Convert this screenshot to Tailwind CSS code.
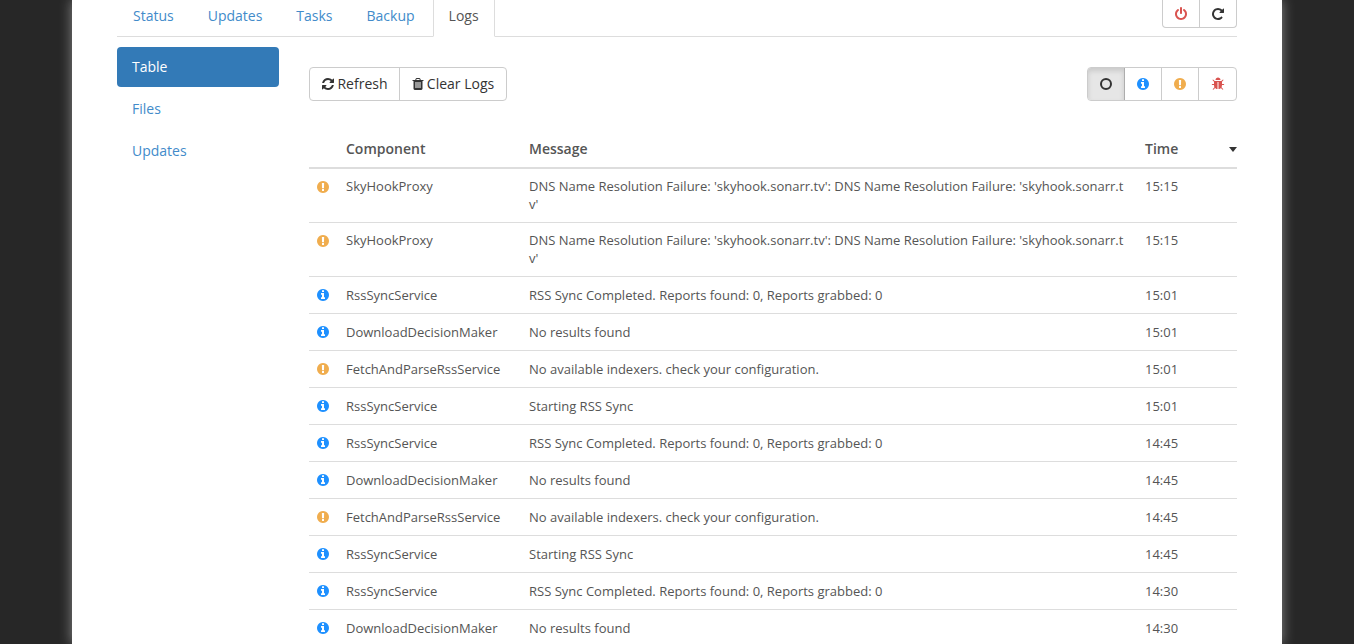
<!DOCTYPE html>
<html lang="en">
<head>
<meta charset="utf-8">
<title>Logs</title>
<script src="https://cdn.jsdelivr.net/npm/@tailwindcss/browser@4"></script>
</head>
<body class="h-screen overflow-hidden bg-[#272727] font-['Open_Sans',sans-serif] text-[14px] text-[#555]">
<main class="mx-[72px] h-full w-[1210px] overflow-hidden bg-white px-[45px] shadow-[0_0_12px_rgba(255,255,255,0.45)]">
  <div class="flex h-[37px] justify-between border-b border-[#ddd]">
    <nav class="flex gap-[2px] text-[#428bca]">
      <a class="mb-[-1px] border border-transparent px-[15px] pt-[5px] leading-[20px]">Status</a>
      <a class="mb-[-1px] border border-transparent px-[15px] pt-[5px] leading-[20px]">Updates</a>
      <a class="mb-[-1px] border border-transparent px-[15px] pt-[5px] leading-[20px]">Tasks</a>
      <a class="mb-[-1px] border border-transparent px-[15px] pt-[5px] leading-[20px]">Backup</a>
      <a class="mb-[-1px] border border-[#ddd] border-t-0 border-b-white bg-white px-[15px] pt-[6px] leading-[20px] text-[#555]">Logs</a>
    </nav>
    <div class="flex h-[28px] rounded-b-[4px] border border-t-0 border-[#ccc]">
      <button class="flex w-[37px] items-center justify-center border-r border-[#ccc]"><svg class="h-[14px] w-[14px] fill-[#d9534f]" viewBox="0 0 1792 1792"><path d="M1664 896q0 156-61 298t-164 245-245 164-298 61-298-61-245-164-164-245-61-298q0-182 80.5-343t226.5-270q43-32 95.5-25t83.5 50q32 42 24.5 94.5t-49.5 84.5q-98 74-151.5 181t-53.5 228q0 104 40.5 198.5t109.5 163.5 163.5 109.5 198.5 40.5 198.5-40.5 163.5-109.5 109.5-163.5 40.5-198.5q0-121-53.5-228t-151.5-181q-42-32-49.5-84.5t24.5-94.5q31-43 84-50t95 25q146 109 226.5 270t80.5 343zm-640-768v640q0 52-38 90t-90 38-90-38-38-90v-640q0-52 38-90t90-38 90 38 38 90z"/></svg></button>
      <button class="flex w-[36px] items-center justify-center"><svg class="h-[14px] w-[14px] fill-[#333]" viewBox="0 0 1792 1792"><path d="M1664 256v448q0 26-19 45t-45 19h-448q-42 0-59-40-17-39 14-69l138-138q-148-137-349-137-104 0-198.5 40.5t-163.5 109.5-109.5 163.5-40.5 198.5 40.5 198.5 109.5 163.5 163.5 109.5 198.5 40.5q119 0 225-52t179-147q7-10 23-12 15 0 25 9l137 138q9 8 9.5 20.5t-7.5 22.5q-109 132-264 204.5t-327 72.5q-156 0-298-61t-245-164-164-245-61-298 61-298 164-245 245-164 298-61q147 0 284.5 55.5t244.5 156.5l130-129q29-31 70-14 39 17 39 59z"/></svg></button>
    </div>
  </div>
  <div class="flex">
    <aside class="w-[162px] shrink-0 pt-[10px]">
      <a class="flex h-[40px] items-center rounded-[4px] bg-[#337ab7] px-[15px] pb-[2px] text-white">Table</a>
      <a class="mt-[2px] flex h-[40px] items-center px-[15px] pb-[2px] text-[#428bca]">Files</a>
      <a class="mt-[2px] flex h-[40px] items-center px-[15px] pb-[2px] text-[#428bca]">Updates</a>
    </aside>
    <section class="ml-[30px] w-[928px] pt-[30px]">
      <div class="flex h-[34px] justify-between">
        <div class="flex rounded-[4px] border border-[#ccc] text-[#333]">
          <button class="flex w-[90px] items-center justify-center gap-[2px] border-r border-[#ccc] pb-[1px]"><svg class="h-[14px] w-[14px] fill-[#333]" viewBox="0 0 1792 1792"><path d="M1639 1056q0 5-1 7-64 268-268 434.5t-478 166.5q-146 0-282.5-55t-243.5-157l-129 129q-19 19-45 19t-45-19-19-45v-448q0-26 19-45t45-19h448q26 0 45 19t19 45-19 45l-137 137q71 66 161 102t187 36q134 0 250-65t186-179q11-17 53-117 8-23 30-23h192q13 0 22.5 9.5t9.5 22.5zm25-800v448q0 26-19 45t-45 19h-448q-26 0-45-19t-19-45 19-45l138-138q-148-137-349-137-134 0-250 65t-186 179q-11 17-53 117-8 23-30 23h-199q-13 0-22.5-9.5t-9.5-22.5v-7q65-268 270-434.5t480-166.5q146 0 284 55.5t245 156.5l130-129q19-19 45-19t45 19 19 45z"/></svg>Refresh</button>
          <button class="flex w-[106px] items-center justify-center gap-[3px] pb-[1px]"><svg class="h-[14px] w-[12px] fill-[#333]" viewBox="128 0 1536 1792"><path d="M704 1376v-704q0-14-9-23t-23-9h-64q-14 0-23 9t-9 23v704q0 14 9 23t23 9h64q14 0 23-9t9-23zm256 0v-704q0-14-9-23t-23-9h-64q-14 0-23 9t-9 23v704q0 14 9 23t23 9h64q14 0 23-9t9-23zm256 0v-704q0-14-9-23t-23-9h-64q-14 0-23 9t-9 23v704q0 14 9 23t23 9h64q14 0 23-9t9-23zm-544-992h448l-48-117q-7-9-17-11h-317q-10 2-17 11zm928 32v64q0 14-9 23t-23 9h-96v948q0 83-47 143.5t-113 60.5h-832q-66 0-113-58.5t-47-141.5v-952h-96q-14 0-23-9t-9-23v-64q0-14 9-23t23-9h309l70-167q15-37 54-63t79-26h320q40 0 79 26t54 63l70 167h309q14 0 23 9t9 23z"/></svg>Clear Logs</button>
        </div>
        <div class="flex rounded-[4px] border border-[#ccc]">
          <button class="flex w-[37px] items-center justify-center rounded-l-[3px] border-r border-[#adadad] bg-[#e6e6e6] shadow-[inset_0_3px_5px_rgba(0,0,0,0.125)]"><span class="h-[12px] w-[12px] rounded-full border-2 border-[#333]"></span></button>
          <button class="flex w-[37px] items-center justify-center border-r border-[#ccc]"><svg class="h-[14px] w-[14px] fill-[#1e90ff]" viewBox="0 0 1792 1792"><path d="M1152 1376v-160q0-14-9-23t-23-9h-96v-512q0-14-9-23t-23-9h-320q-14 0-23 9t-9 23v160q0 14 9 23t23 9h96v320h-96q-14 0-23 9t-9 23v160q0 14 9 23t23 9h448q14 0 23-9t9-23zm-128-896v-160q0-14-9-23t-23-9h-192q-14 0-23 9t-9 23v160q0 14 9 23t23 9h192q14 0 23-9t9-23zm640 416q0 209-103 385.5t-279.5 279.5-385.5 103-385.5-103-279.5-279.5-103-385.5 103-385.5 279.5-279.5 385.5-103 385.5 103 279.5 279.5 103 385.5z"/></svg></button>
          <button class="flex w-[37px] items-center justify-center border-r border-[#ccc]"><svg class="h-[14px] w-[14px] fill-[#f0ad4e]" viewBox="0 0 1792 1792"><path d="M896 128q209 0 385.5 103t279.5 279.5 103 385.5-103 385.5-279.5 279.5-385.5 103-385.5-103-279.5-279.5-103-385.5 103-385.5 279.5-279.5 385.5-103zm128 1247v-190q0-14-9-23.5t-22-9.5h-192q-13 0-23 10t-10 23v190q0 13 10 23t23 10h192q13 0 22-9.5t9-23.5zm-2-344l18-621q0-12-10-18-10-8-24-8h-220q-14 0-24 8-10 6-10 18l17 621q0 10 10 17.5t24 7.5h185q14 0 23.5-7.5t10.5-17.5z"/></svg></button>
          <button class="flex w-[37px] items-center justify-center"><svg class="h-[14px] w-[14px] fill-[#d9534f]" viewBox="0 0 1792 1792"><path d="M1696 960q0 26-19 45t-45 19h-224q0 171-67 290l208 209q19 19 19 45t-19 45q-18 19-45 19t-45-19l-198-197q-5 5-15 13t-42 28.5-65 36.5-82 29-97 13v-896h-128v896q-51 0-101.5-13.5t-87-33-66-39-43.5-32.5l-15-14-183 207q-20 21-48 21-24 0-43-16-19-18-20.5-44.5t15.5-46.5l202-227q-58-114-58-274h-224q-26 0-45-19t-19-45 19-45 45-19h224v-294l-173-173q-19-19-19-45t19-45 45-19 45 19l173 173h844l173-173q19-19 45-19t45 19 19 45-19 45l-173 173v294h224q26 0 45 19t19 45zm-480-576h-640q0-133 93.5-226.5t226.5-93.5 226.5 93.5 93.5 226.5z"/></svg></button>
        </div>
      </div>
      <div class="mt-[29px] text-[13px]">
        <div class="grid h-[39px] grid-cols-[37px_183px_616px_92px] items-center border-b-2 border-[#ddd] text-[14px] font-semibold">
          <span></span><span>Component</span><span>Message</span>
          <span class="flex items-center justify-between"><span>Time</span><i class="mt-[1px] h-0 w-0 border-x-[4px] border-t-[5px] border-x-transparent border-t-[#333]"></i></span>
        </div>
        <div class="grid h-[54px] grid-cols-[37px_183px_616px_92px] border-b border-[#ddd] pt-[8px] leading-[18.2px]">
          <span class="pl-[7px] pt-[3px]"><svg class="h-[14px] w-[14px] fill-[#f0ad4e]" viewBox="0 0 1792 1792"><path d="M896 128q209 0 385.5 103t279.5 279.5 103 385.5-103 385.5-279.5 279.5-385.5 103-385.5-103-279.5-279.5-103-385.5 103-385.5 279.5-279.5 385.5-103zm128 1247v-190q0-14-9-23.5t-22-9.5h-192q-13 0-23 10t-10 23v190q0 13 10 23t23 10h192q13 0 22-9.5t9-23.5zm-2-344l18-621q0-12-10-18-10-8-24-8h-220q-14 0-24 8-10 6-10 18l17 621q0 10 10 17.5t24 7.5h185q14 0 23.5-7.5t10.5-17.5z"/></svg></span>
          <span>SkyHookProxy</span><span class="break-all pr-[16px]">DNS Name Resolution Failure: 'skyhook.sonarr.tv': DNS Name Resolution Failure: 'skyhook.sonarr.tv'</span><span>15:15</span>
        </div>
        <div class="grid h-[54px] grid-cols-[37px_183px_616px_92px] border-b border-[#ddd] pt-[8px] leading-[18.2px]">
          <span class="pl-[7px] pt-[3px]"><svg class="h-[14px] w-[14px] fill-[#f0ad4e]" viewBox="0 0 1792 1792"><path d="M896 128q209 0 385.5 103t279.5 279.5 103 385.5-103 385.5-279.5 279.5-385.5 103-385.5-103-279.5-279.5-103-385.5 103-385.5 279.5-279.5 385.5-103zm128 1247v-190q0-14-9-23.5t-22-9.5h-192q-13 0-23 10t-10 23v190q0 13 10 23t23 10h192q13 0 22-9.5t9-23.5zm-2-344l18-621q0-12-10-18-10-8-24-8h-220q-14 0-24 8-10 6-10 18l17 621q0 10 10 17.5t24 7.5h185q14 0 23.5-7.5t10.5-17.5z"/></svg></span>
          <span>SkyHookProxy</span><span class="break-all pr-[16px]">DNS Name Resolution Failure: 'skyhook.sonarr.tv': DNS Name Resolution Failure: 'skyhook.sonarr.tv'</span><span>15:15</span>
        </div>
        <div class="grid h-[37px] grid-cols-[37px_183px_616px_92px] items-center border-b border-[#ddd] [&>span]:pt-[2px]">
          <svg class="ml-[7px] h-[14px] w-[14px] fill-[#1e90ff]" viewBox="0 0 1792 1792"><path d="M1152 1376v-160q0-14-9-23t-23-9h-96v-512q0-14-9-23t-23-9h-320q-14 0-23 9t-9 23v160q0 14 9 23t23 9h96v320h-96q-14 0-23 9t-9 23v160q0 14 9 23t23 9h448q14 0 23-9t9-23zm-128-896v-160q0-14-9-23t-23-9h-192q-14 0-23 9t-9 23v160q0 14 9 23t23 9h192q14 0 23-9t9-23zm640 416q0 209-103 385.5t-279.5 279.5-385.5 103-385.5-103-279.5-279.5-103-385.5 103-385.5 279.5-279.5 385.5-103 385.5 103 279.5 279.5 103 385.5z"/></svg>
          <span>RssSyncService</span><span>RSS Sync Completed. Reports found: 0, Reports grabbed: 0</span><span>15:01</span>
        </div>
        <div class="grid h-[37px] grid-cols-[37px_183px_616px_92px] items-center border-b border-[#ddd] [&>span]:pt-[2px]">
          <svg class="ml-[7px] h-[14px] w-[14px] fill-[#1e90ff]" viewBox="0 0 1792 1792"><path d="M1152 1376v-160q0-14-9-23t-23-9h-96v-512q0-14-9-23t-23-9h-320q-14 0-23 9t-9 23v160q0 14 9 23t23 9h96v320h-96q-14 0-23 9t-9 23v160q0 14 9 23t23 9h448q14 0 23-9t9-23zm-128-896v-160q0-14-9-23t-23-9h-192q-14 0-23 9t-9 23v160q0 14 9 23t23 9h192q14 0 23-9t9-23zm640 416q0 209-103 385.5t-279.5 279.5-385.5 103-385.5-103-279.5-279.5-103-385.5 103-385.5 279.5-279.5 385.5-103 385.5 103 279.5 279.5 103 385.5z"/></svg>
          <span>DownloadDecisionMaker</span><span>No results found</span><span>15:01</span>
        </div>
        <div class="grid h-[37px] grid-cols-[37px_183px_616px_92px] items-center border-b border-[#ddd] [&>span]:pt-[2px]">
          <svg class="ml-[7px] h-[14px] w-[14px] fill-[#f0ad4e]" viewBox="0 0 1792 1792"><path d="M896 128q209 0 385.5 103t279.5 279.5 103 385.5-103 385.5-279.5 279.5-385.5 103-385.5-103-279.5-279.5-103-385.5 103-385.5 279.5-279.5 385.5-103zm128 1247v-190q0-14-9-23.5t-22-9.5h-192q-13 0-23 10t-10 23v190q0 13 10 23t23 10h192q13 0 22-9.5t9-23.5zm-2-344l18-621q0-12-10-18-10-8-24-8h-220q-14 0-24 8-10 6-10 18l17 621q0 10 10 17.5t24 7.5h185q14 0 23.5-7.5t10.5-17.5z"/></svg>
          <span>FetchAndParseRssService</span><span>No available indexers. check your configuration.</span><span>15:01</span>
        </div>
        <div class="grid h-[37px] grid-cols-[37px_183px_616px_92px] items-center border-b border-[#ddd] [&>span]:pt-[2px]">
          <svg class="ml-[7px] h-[14px] w-[14px] fill-[#1e90ff]" viewBox="0 0 1792 1792"><path d="M1152 1376v-160q0-14-9-23t-23-9h-96v-512q0-14-9-23t-23-9h-320q-14 0-23 9t-9 23v160q0 14 9 23t23 9h96v320h-96q-14 0-23 9t-9 23v160q0 14 9 23t23 9h448q14 0 23-9t9-23zm-128-896v-160q0-14-9-23t-23-9h-192q-14 0-23 9t-9 23v160q0 14 9 23t23 9h192q14 0 23-9t9-23zm640 416q0 209-103 385.5t-279.5 279.5-385.5 103-385.5-103-279.5-279.5-103-385.5 103-385.5 279.5-279.5 385.5-103 385.5 103 279.5 279.5 103 385.5z"/></svg>
          <span>RssSyncService</span><span>Starting RSS Sync</span><span>15:01</span>
        </div>
        <div class="grid h-[37px] grid-cols-[37px_183px_616px_92px] items-center border-b border-[#ddd] [&>span]:pt-[2px]">
          <svg class="ml-[7px] h-[14px] w-[14px] fill-[#1e90ff]" viewBox="0 0 1792 1792"><path d="M1152 1376v-160q0-14-9-23t-23-9h-96v-512q0-14-9-23t-23-9h-320q-14 0-23 9t-9 23v160q0 14 9 23t23 9h96v320h-96q-14 0-23 9t-9 23v160q0 14 9 23t23 9h448q14 0 23-9t9-23zm-128-896v-160q0-14-9-23t-23-9h-192q-14 0-23 9t-9 23v160q0 14 9 23t23 9h192q14 0 23-9t9-23zm640 416q0 209-103 385.5t-279.5 279.5-385.5 103-385.5-103-279.5-279.5-103-385.5 103-385.5 279.5-279.5 385.5-103 385.5 103 279.5 279.5 103 385.5z"/></svg>
          <span>RssSyncService</span><span>RSS Sync Completed. Reports found: 0, Reports grabbed: 0</span><span>14:45</span>
        </div>
        <div class="grid h-[37px] grid-cols-[37px_183px_616px_92px] items-center border-b border-[#ddd] [&>span]:pt-[2px]">
          <svg class="ml-[7px] h-[14px] w-[14px] fill-[#1e90ff]" viewBox="0 0 1792 1792"><path d="M1152 1376v-160q0-14-9-23t-23-9h-96v-512q0-14-9-23t-23-9h-320q-14 0-23 9t-9 23v160q0 14 9 23t23 9h96v320h-96q-14 0-23 9t-9 23v160q0 14 9 23t23 9h448q14 0 23-9t9-23zm-128-896v-160q0-14-9-23t-23-9h-192q-14 0-23 9t-9 23v160q0 14 9 23t23 9h192q14 0 23-9t9-23zm640 416q0 209-103 385.5t-279.5 279.5-385.5 103-385.5-103-279.5-279.5-103-385.5 103-385.5 279.5-279.5 385.5-103 385.5 103 279.5 279.5 103 385.5z"/></svg>
          <span>DownloadDecisionMaker</span><span>No results found</span><span>14:45</span>
        </div>
        <div class="grid h-[37px] grid-cols-[37px_183px_616px_92px] items-center border-b border-[#ddd] [&>span]:pt-[2px]">
          <svg class="ml-[7px] h-[14px] w-[14px] fill-[#f0ad4e]" viewBox="0 0 1792 1792"><path d="M896 128q209 0 385.5 103t279.5 279.5 103 385.5-103 385.5-279.5 279.5-385.5 103-385.5-103-279.5-279.5-103-385.5 103-385.5 279.5-279.5 385.5-103zm128 1247v-190q0-14-9-23.5t-22-9.5h-192q-13 0-23 10t-10 23v190q0 13 10 23t23 10h192q13 0 22-9.5t9-23.5zm-2-344l18-621q0-12-10-18-10-8-24-8h-220q-14 0-24 8-10 6-10 18l17 621q0 10 10 17.5t24 7.5h185q14 0 23.5-7.5t10.5-17.5z"/></svg>
          <span>FetchAndParseRssService</span><span>No available indexers. check your configuration.</span><span>14:45</span>
        </div>
        <div class="grid h-[37px] grid-cols-[37px_183px_616px_92px] items-center border-b border-[#ddd] [&>span]:pt-[2px]">
          <svg class="ml-[7px] h-[14px] w-[14px] fill-[#1e90ff]" viewBox="0 0 1792 1792"><path d="M1152 1376v-160q0-14-9-23t-23-9h-96v-512q0-14-9-23t-23-9h-320q-14 0-23 9t-9 23v160q0 14 9 23t23 9h96v320h-96q-14 0-23 9t-9 23v160q0 14 9 23t23 9h448q14 0 23-9t9-23zm-128-896v-160q0-14-9-23t-23-9h-192q-14 0-23 9t-9 23v160q0 14 9 23t23 9h192q14 0 23-9t9-23zm640 416q0 209-103 385.5t-279.5 279.5-385.5 103-385.5-103-279.5-279.5-103-385.5 103-385.5 279.5-279.5 385.5-103 385.5 103 279.5 279.5 103 385.5z"/></svg>
          <span>RssSyncService</span><span>Starting RSS Sync</span><span>14:45</span>
        </div>
        <div class="grid h-[37px] grid-cols-[37px_183px_616px_92px] items-center border-b border-[#ddd] [&>span]:pt-[2px]">
          <svg class="ml-[7px] h-[14px] w-[14px] fill-[#1e90ff]" viewBox="0 0 1792 1792"><path d="M1152 1376v-160q0-14-9-23t-23-9h-96v-512q0-14-9-23t-23-9h-320q-14 0-23 9t-9 23v160q0 14 9 23t23 9h96v320h-96q-14 0-23 9t-9 23v160q0 14 9 23t23 9h448q14 0 23-9t9-23zm-128-896v-160q0-14-9-23t-23-9h-192q-14 0-23 9t-9 23v160q0 14 9 23t23 9h192q14 0 23-9t9-23zm640 416q0 209-103 385.5t-279.5 279.5-385.5 103-385.5-103-279.5-279.5-103-385.5 103-385.5 279.5-279.5 385.5-103 385.5 103 279.5 279.5 103 385.5z"/></svg>
          <span>RssSyncService</span><span>RSS Sync Completed. Reports found: 0, Reports grabbed: 0</span><span>14:30</span>
        </div>
        <div class="grid h-[37px] grid-cols-[37px_183px_616px_92px] items-center border-b border-[#ddd] [&>span]:pt-[2px]">
          <svg class="ml-[7px] h-[14px] w-[14px] fill-[#1e90ff]" viewBox="0 0 1792 1792"><path d="M1152 1376v-160q0-14-9-23t-23-9h-96v-512q0-14-9-23t-23-9h-320q-14 0-23 9t-9 23v160q0 14 9 23t23 9h96v320h-96q-14 0-23 9t-9 23v160q0 14 9 23t23 9h448q14 0 23-9t9-23zm-128-896v-160q0-14-9-23t-23-9h-192q-14 0-23 9t-9 23v160q0 14 9 23t23 9h192q14 0 23-9t9-23zm640 416q0 209-103 385.5t-279.5 279.5-385.5 103-385.5-103-279.5-279.5-103-385.5 103-385.5 279.5-279.5 385.5-103 385.5 103 279.5 279.5 103 385.5z"/></svg>
          <span>DownloadDecisionMaker</span><span>No results found</span><span>14:30</span>
        </div>
      </div>
    </section>
  </div>
</main>
</body>
</html>
